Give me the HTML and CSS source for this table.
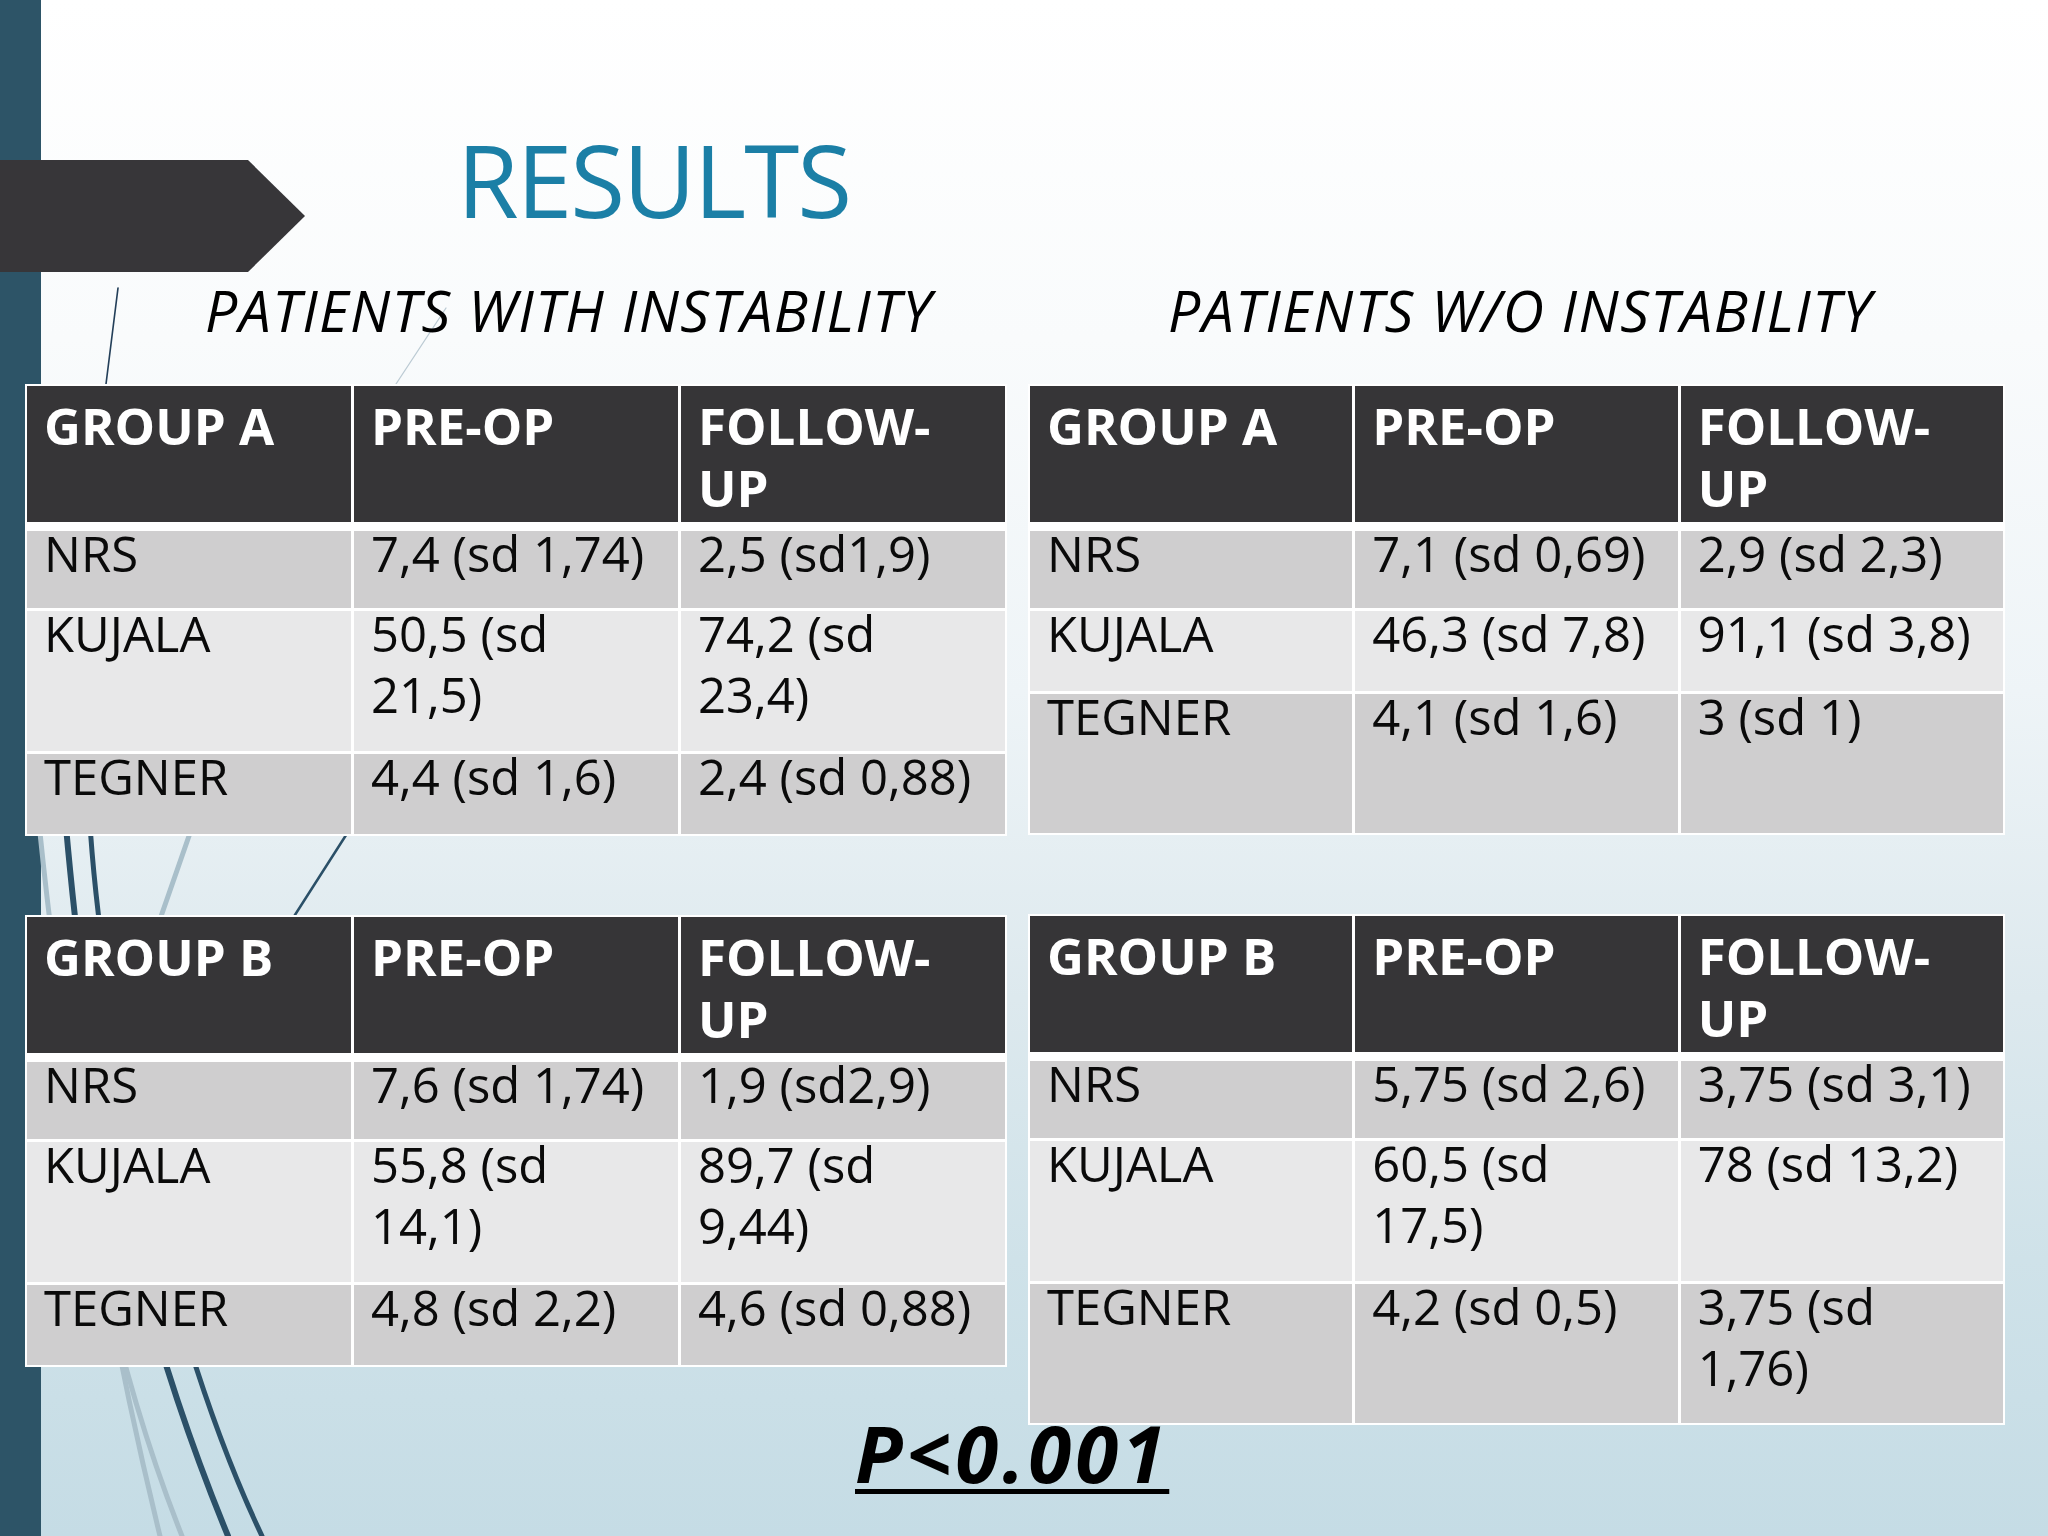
FILE: index.html
```html
<!DOCTYPE html>
<html lang="en">
<head>
<meta charset="utf-8">
<title>Results</title>
<link rel="stylesheet" href="styles.css">
</head>
<body>
<main class="slide">
  <svg class="wisps" width="2048" height="1536" viewBox="0 0 2048 1536" aria-hidden="true">
    <path class="w-thin" d="M118 288 L106 384"/>
    <path class="w-faint" d="M446 308 L396 384"/>
    <path class="w-light" d="M35 780 C50 950 90 1250 160 1536"/>
    <path class="w-light" d="M60 1000 C80 1200 120 1380 182 1536"/>
    <path class="w-light" d="M205 790 L158 925"/>
    <path class="w-dark" d="M62 780 C80 1000 110 1250 228 1536"/>
    <path class="w-dark2" d="M88 780 C92 950 150 1300 262 1536"/>
    <path class="w-diag" d="M348 832 L293 918"/>
  </svg>

  <header class="top">
    <div class="arrow"></div>
    <h1 class="title">RESULTS</h1>
  </header>

  <div class="subs">
    <h2 class="sub sub-left">PATIENTS WITH INSTABILITY</h2>
    <h2 class="sub">PATIENTS W/O INSTABILITY</h2>
  </div>

  <div class="tables">
    <div class="col col-left">
      <div class="tbl rows-a">
        <div class="th">GROUP A</div>
        <div class="th">PRE-OP</div>
        <div class="th">FOLLOW-<br>UP</div>
        <div class="td odd"><div class="tx">NRS</div></div>
        <div class="td odd"><div class="tx">7,4 (sd 1,74)</div></div>
        <div class="td odd"><div class="tx">2,5 (sd1,9)</div></div>
        <div class="td even"><div class="tx">KUJALA</div></div>
        <div class="td even"><div class="tx">50,5 (sd<br>21,5)</div></div>
        <div class="td even"><div class="tx">74,2 (sd<br>23,4)</div></div>
        <div class="td odd"><div class="tx">TEGNER</div></div>
        <div class="td odd"><div class="tx">4,4 (sd 1,6)</div></div>
        <div class="td odd"><div class="tx">2,4 (sd 0,88)</div></div>
      </div>

      <div class="tbl rows-a">
        <div class="th">GROUP B</div>
        <div class="th">PRE-OP</div>
        <div class="th">FOLLOW-<br>UP</div>
        <div class="td odd"><div class="tx">NRS</div></div>
        <div class="td odd"><div class="tx">7,6 (sd 1,74)</div></div>
        <div class="td odd"><div class="tx">1,9 (sd2,9)</div></div>
        <div class="td even"><div class="tx">KUJALA</div></div>
        <div class="td even"><div class="tx">55,8 (sd<br>14,1)</div></div>
        <div class="td even"><div class="tx">89,7 (sd<br>9,44)</div></div>
        <div class="td odd"><div class="tx">TEGNER</div></div>
        <div class="td odd"><div class="tx">4,8 (sd 2,2)</div></div>
        <div class="td odd"><div class="tx">4,6 (sd 0,88)</div></div>
      </div>

      <p class="pval">P&lt;0.001</p>
    </div>

    <div class="col col-right">
      <div class="tbl rows-b">
        <div class="th">GROUP A</div>
        <div class="th">PRE-OP</div>
        <div class="th">FOLLOW-<br>UP</div>
        <div class="td odd"><div class="tx">NRS</div></div>
        <div class="td odd"><div class="tx">7,1 (sd 0,69)</div></div>
        <div class="td odd"><div class="tx">2,9 (sd 2,3)</div></div>
        <div class="td even"><div class="tx">KUJALA</div></div>
        <div class="td even"><div class="tx">46,3 (sd 7,8)</div></div>
        <div class="td even"><div class="tx">91,1 (sd 3,8)</div></div>
        <div class="td odd"><div class="tx">TEGNER</div></div>
        <div class="td odd"><div class="tx">4,1 (sd 1,6)</div></div>
        <div class="td odd"><div class="tx">3 (sd 1)</div></div>
      </div>

      <div class="tbl rows-c">
        <div class="th">GROUP B</div>
        <div class="th">PRE-OP</div>
        <div class="th">FOLLOW-<br>UP</div>
        <div class="td odd"><div class="tx">NRS</div></div>
        <div class="td odd"><div class="tx">5,75 (sd 2,6)</div></div>
        <div class="td odd"><div class="tx">3,75 (sd 3,1)</div></div>
        <div class="td even"><div class="tx">KUJALA</div></div>
        <div class="td even"><div class="tx">60,5 (sd<br>17,5)</div></div>
        <div class="td even"><div class="tx">78 (sd 13,2)</div></div>
        <div class="td odd"><div class="tx">TEGNER</div></div>
        <div class="td odd"><div class="tx">4,2 (sd 0,5)</div></div>
        <div class="td odd"><div class="tx">3,75 (sd<br>1,76)</div></div>
      </div>
    </div>
  </div>
</main>
</body>
</html>
```

FILE: styles.css
```css
* { box-sizing: border-box; }

html, body {
  margin: 0;
  padding: 0;
}

body {
  font-family: "Open Sans", "Noto Sans", sans-serif;
  background: #ffffff;
}

.slide {
  position: relative;
  width: 2048px;
  height: 1536px;
  overflow: hidden;
  background:
    linear-gradient(to right, #2d5467 0, #2d5467 41px, transparent 41px),
    linear-gradient(to bottom, #ffffff 0%, #f9fbfc 22%, #eef4f7 45%, #dde9ee 65%, #cfe2e9 82%, #c5dce5 100%);
}

.wisps {
  position: absolute;
  left: 0;
  top: 0;
  z-index: 0;
}

.wisps path { fill: none; stroke-linecap: round; }
.w-thin { stroke: #233f59; stroke-width: 1.6; }
.w-faint { stroke: #bccbd4; stroke-width: 1.3; }
.w-light { stroke: #a9bfca; stroke-width: 5; }
.w-dark { stroke: #2b5068; stroke-width: 6; }
.w-dark2 { stroke: #2b5068; stroke-width: 5; }
.w-diag { stroke: #2b5068; stroke-width: 2.5; }

.top, .subs, .tables {
  position: relative;
  z-index: 1;
}

/* header */
.top {
  display: flex;
  align-items: flex-start;
  height: 272px;
}

.arrow {
  flex: 0 0 305px;
  height: 112px;
  margin-top: 160px;
  background: #373639;
  clip-path: polygon(0 0, 248px 0, 305px 56px, 248px 112px, 0 112px);
}

.title {
  margin: 111px 0 0 152px;
  font-size: 100px;
  font-weight: 400;
  line-height: normal;
  color: #1b7fa6;
  letter-spacing: -2px;
}

/* subtitles */
.subs {
  display: grid;
  grid-template-columns: 1168px 1fr;
}

.sub {
  margin: 0;
  font-size: 57px;
  font-style: italic;
  font-weight: 400;
  line-height: 76px;
  letter-spacing: 1.5px;
  color: #000000;
  white-space: nowrap;
}

.sub-left { padding-left: 205px; }

/* tables */
.tables {
  display: flex;
  gap: 21px;
  padding-left: 25px;
  margin-top: 36px;
}

.col {
  display: flex;
  flex-direction: column;
}

.col-left { width: 982px; }
.col-right { width: 977px; }

.tbl {
  display: grid;
  grid-template-columns: repeat(3, 1fr);
  gap: 3px;
  padding: 2px;
  background: #ffffff;
}

.tbl + .tbl { margin-top: 79px; }

.rows-a { grid-template-rows: 142px 77px 140px 80px; }
.rows-b { grid-template-rows: 142px 77px 80px 139px; }
.rows-c { grid-template-rows: 142px 77px 140px 139px; }

.th {
  margin-bottom: 6px;
  padding: 8px 17px 0;
  background: #363537;
  color: #ffffff;
  font-size: 51px;
  font-weight: 700;
  line-height: 62px;
}

.td {
  padding: 0 17px;
  font-size: 49px;
  line-height: 61px;
  color: #0a0a0a;
}

.tx { margin-top: -8px; }

.odd { background: #cfcecf; }
.even { background: #e8e8e9; }

/* p-value */
.pval {
  margin: 33px 0 0 830px;
  font-size: 78px;
  font-weight: 700;
  font-style: italic;
  line-height: normal;
  letter-spacing: 4px;
  color: #000000;
  white-space: nowrap;
  text-decoration: underline;
  text-decoration-thickness: 5px;
  text-underline-offset: 6px;
}
```
